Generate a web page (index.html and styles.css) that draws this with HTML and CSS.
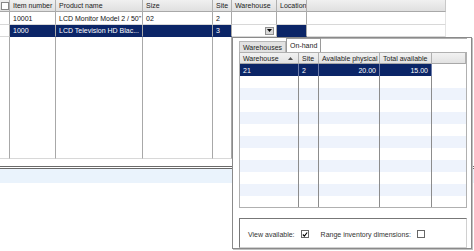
FILE: index.html
```html
<!DOCTYPE html>
<html>
<head>
<meta charset="utf-8">
<link rel="stylesheet" href="styles.css">
</head>
<body>
<div class="page">
  <div class="main">
    <div class="grid">
      <div class="row head">
        <div class="c w-chk"><span class="hbox"></span></div>
        <div class="c w-item">Item number</div>
        <div class="c w-prod">Product name</div>
        <div class="c w-size">Size</div>
        <div class="c w-site">Site</div>
        <div class="c w-wh">Warehouse</div>
        <div class="c w-loc">Location</div>
        <div class="c w-fill"></div>
      </div>
      <div class="row r1">
        <div class="c w-chk"></div>
        <div class="c w-item">10001</div>
        <div class="c w-prod">LCD Monitor Model 2 / 50"</div>
        <div class="c w-size">02</div>
        <div class="c w-site">2</div>
        <div class="c w-wh"></div>
        <div class="c w-loc"></div>
        <div class="c w-fill nob"></div>
      </div>
      <div class="row r2">
        <div class="c w-chk"></div>
        <div class="c w-item sel">1000</div>
        <div class="c w-prod sel">LCD Television HD Blac...</div>
        <div class="c w-size sel"></div>
        <div class="c w-site sel">3</div>
        <div class="c w-wh edit"><span class="ddbtn"><svg width="5" height="3" viewBox="0 0 5 3"><path d="M0 0H5L2.5 3Z" fill="#000"/></svg></span></div>
        <div class="c w-loc sel"></div>
        <div class="c w-fill nob"></div>
      </div>
      <div class="row body">
        <div class="c w-chk"></div>
        <div class="c w-item"></div>
        <div class="c w-prod"></div>
        <div class="c w-size"></div>
        <div class="c w-site"></div>
        <div class="c w-wh"></div>
        <div class="c w-loc"></div>
        <div class="c w-fill nob"></div>
      </div>
    </div>
    <div class="sep"></div>
    <div class="band"></div>
  </div>

  <div class="popup">
    <div class="tabs">
      <div class="tab">Warehouses</div>
      <div class="tab active">On-hand</div>
      <div class="tabrest"></div>
    </div>
    <div class="igrid">
      <div class="irow ihead">
        <div class="ic iw-wh">Warehouse<span class="sort"><svg width="5" height="3" viewBox="0 0 5 3"><path d="M0 3H5L2.5 0Z" fill="#555"/></svg></span></div>
        <div class="ic iw-site">Site</div>
        <div class="ic iw-ap">Available physical</div>
        <div class="ic iw-ta">Total available</div>
        <div class="ic iw-fill"></div>
      </div>
      <div class="irow isel">
        <div class="ic iw-wh s">21</div>
        <div class="ic iw-site s">2</div>
        <div class="ic iw-ap s num">20.00</div>
        <div class="ic iw-ta s num">15.00</div>
        <div class="ic iw-fill"></div>
      </div>
      <div class="irow"><div class="ic iw-wh"></div><div class="ic iw-site"></div><div class="ic iw-ap"></div><div class="ic iw-ta"></div><div class="ic iw-fill"></div></div>
      <div class="irow alt"><div class="ic iw-wh"></div><div class="ic iw-site"></div><div class="ic iw-ap"></div><div class="ic iw-ta"></div><div class="ic iw-fill"></div></div>
      <div class="irow"><div class="ic iw-wh"></div><div class="ic iw-site"></div><div class="ic iw-ap"></div><div class="ic iw-ta"></div><div class="ic iw-fill"></div></div>
      <div class="irow alt"><div class="ic iw-wh"></div><div class="ic iw-site"></div><div class="ic iw-ap"></div><div class="ic iw-ta"></div><div class="ic iw-fill"></div></div>
      <div class="irow"><div class="ic iw-wh"></div><div class="ic iw-site"></div><div class="ic iw-ap"></div><div class="ic iw-ta"></div><div class="ic iw-fill"></div></div>
      <div class="irow alt"><div class="ic iw-wh"></div><div class="ic iw-site"></div><div class="ic iw-ap"></div><div class="ic iw-ta"></div><div class="ic iw-fill"></div></div>
      <div class="irow"><div class="ic iw-wh"></div><div class="ic iw-site"></div><div class="ic iw-ap"></div><div class="ic iw-ta"></div><div class="ic iw-fill"></div></div>
      <div class="irow alt"><div class="ic iw-wh"></div><div class="ic iw-site"></div><div class="ic iw-ap"></div><div class="ic iw-ta"></div><div class="ic iw-fill"></div></div>
      <div class="irow"><div class="ic iw-wh"></div><div class="ic iw-site"></div><div class="ic iw-ap"></div><div class="ic iw-ta"></div><div class="ic iw-fill"></div></div>
      <div class="irow alt"><div class="ic iw-wh"></div><div class="ic iw-site"></div><div class="ic iw-ap"></div><div class="ic iw-ta"></div><div class="ic iw-fill"></div></div>
      <div class="irow"><div class="ic iw-wh"></div><div class="ic iw-site"></div><div class="ic iw-ap"></div><div class="ic iw-ta"></div><div class="ic iw-fill"></div></div>
    </div>
    <div class="opts">
      <span class="lbl">View available:</span>
      <span class="cb"><svg width="7" height="7" viewBox="0 0 7 7"><path d="M1 3.5L2.8 5.3L6 1.2" stroke="#000" stroke-width="1.3" fill="none"/></svg></span>
      <span class="lbl l2">Range inventory dimensions:</span>
      <span class="cb"></span>
    </div>
  </div>
</div>
</body>
</html>
```

FILE: styles.css
```css
* { box-sizing: border-box; }
html, body { margin: 0; padding: 0; }
body {
  width: 474px;
  height: 251px;
  overflow: hidden;
  background: #fff;
  font-family: "Liberation Sans", Arial, sans-serif;
  font-size: 7px;
  color: #111;
}
.page { position: relative; width: 474px; height: 251px; }

.main { display: flex; flex-direction: column; }
.grid { display: flex; flex-direction: column; width: 446px; }
.row { display: flex; }
.c {
  flex: none;
  border-right: 1px solid #a8a8a8;
  padding: 0 3px;
  white-space: nowrap;
  overflow: hidden;
  display: flex;
  align-items: center;
}
.head { height: 12px; }
.head .c {
  background: linear-gradient(#f0f0f0, #e0e0e0);
  border-bottom: 1px solid #a8a8a8;
  border-right: 1px solid #b0b0b0;
  color: #222;
}
.r1 { height: 13px; }
.r2 { height: 12px; }
.r1 .c, .r2 .c { border-bottom: 1px solid #d8d8d8; }
.body { height: 122px; }
.body .c { border-bottom: 1px solid #d8d8d8; }

.w-chk { width: 10px; padding: 0; justify-content: center; }
.w-item { width: 46px; }
.w-prod { width: 87px; }
.w-size { width: 70px; }
.w-site { width: 19px; }
.w-wh { width: 45px; }
.w-loc { width: 30px; }
.w-fill { width: 139px; }
.head .w-fill { border-right: 1px solid #c8c8c8; }
.nob { border-right: 1px solid #e4e4e4; }

.hbox {
  width: 8px; height: 8px;
  background: #fff;
  border: 1px solid #888;
}
.sel { background: #0b2567; color: #fff; }
.r2 .sel { border-bottom-color: #0b2567; }
.edit { background: #fff; justify-content: flex-end; padding: 0 2px 0 0; }
.ddbtn {
  width: 9px; height: 8px;
  background: #d8d8d8;
  border: 1px solid #909090;
  display: flex; align-items: center; justify-content: center;
}

.sep {
  height: 10px;
  border-bottom: 3px double #6a6a6a;
  width: 474px;
}
.band { height: 14px; background: #eaf3fc; width: 474px; }

/* popup */
.popup {
  position: absolute;
  left: 232px;
  top: 37px;
  width: 240px;
  height: 212px;
  background: #fff;
  border: 1px solid #8a8a8a;
  box-shadow: 1px 1px 0 #c0c0c0;
  padding: 0 4px 0 6px;
  display: flex;
  flex-direction: column;
}
.tabs { display: flex; align-items: flex-end; height: 14px; }
.tab {
  height: 11px;
  padding: 0 3px;
  display: flex; align-items: center;
  background: #e2e2e2;
  border: 1px solid #b8b8b8;
  border-bottom: none;
  color: #222;
}
.tab.active {
  height: 14px;
  background: #fff;
  border: 1px solid #9a9a9a;
  border-bottom: none;
}
.tabrest { flex: 1; height: 14px; border-top: 1px solid #b0b0b0; }

.igrid {
  height: 156px;
  border: 1px solid #b0b0b0;
  display: flex;
  flex-direction: column;
  overflow: hidden;
}
.irow { display: flex; height: 12px; flex: none; }
.irow.alt { background: #eef3fc; }
.ic {
  flex: none;
  height: 100%;
  border-right: 1px solid #8c8c8c;
  padding: 0 3px;
  white-space: nowrap;
  display: flex;
  align-items: center;
}
.ihead { height: 11px; }
.ihead .ic {
  background: linear-gradient(#f2f2f2, #e2e2e2);
  border-bottom: 1px solid #a8a8a8;
  border-right: 1px solid #b0b0b0;
  color: #222;
}
.iw-wh { width: 59px; justify-content: space-between; }
.iw-site { width: 20px; }
.iw-ap { width: 61px; }
.iw-ta { width: 52px; }
.iw-fill { width: 34px; border-right: none; }
.ic.s { background: #0b2567; color: #fff; border-right-color: #6a7aa8; }
.ic.num { justify-content: flex-end; }
.sort { display: flex; align-items: center; padding-right: 2px; }

.opts {
  margin-top: 10px;
  height: 30px;
  border: 1px solid #777;
  border-right-color: #d0d0d0;
  border-bottom-color: #d0d0d0;
  display: flex;
  align-items: center;
  padding: 2px 0 0 8px;
  color: #333;
}
.lbl { white-space: nowrap; }
.l2 { margin-left: 12px; }
.cb {
  width: 8px; height: 8px;
  margin-left: 6px;
  border: 1px solid #666;
  background: #fff;
  display: flex; align-items: center; justify-content: center;
}
```
